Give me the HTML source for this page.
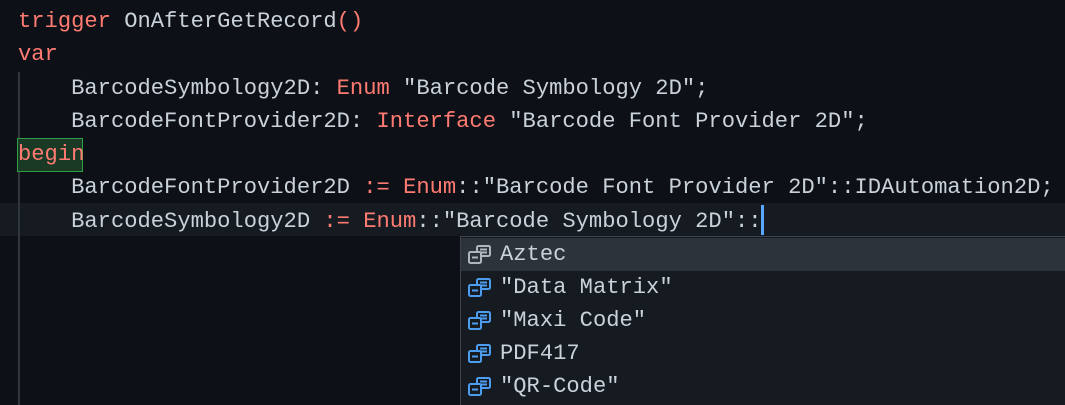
<!DOCTYPE html>
<html><head><style>
html,body{margin:0;padding:0;background:#0d1117;width:1065px;height:405px;overflow:hidden;position:relative}
.code{position:absolute;left:18px;top:5px;font-family:"Liberation Mono",monospace;font-size:22.13px;line-height:33.3px;color:#c9d1d9;white-space:pre}
.k{color:#ff7b72}
.cur{position:absolute;left:0;top:203px;width:1065px;height:33px;background:#161b22}
.guide{position:absolute;left:18px;top:72px;width:2px;height:333px;background:#30363d}
.beg{position:absolute;left:17px;top:138px;width:64px;height:32px;background:#1a3a26;border:1px solid #2ea043}
.caret{position:absolute;left:761px;top:205px;width:3px;height:30px;background:#58a6ff}
.dd{position:absolute;left:460px;top:236px;width:620px;height:180px;background:#161b22;border:1px solid #3d444d}
.it{position:absolute;left:0;width:620px;height:33px;font-family:"Liberation Mono",monospace;font-size:22.13px;line-height:33px;color:#c9d1d9;white-space:pre}
.it span{position:absolute;left:39px;top:0}
.it svg{position:absolute;left:6px;top:7px}
.sel{background:#2d333b}
</style></head><body>
<div class="cur"></div>
<div class="guide"></div>
<div class="beg"></div>
<div class="code"><span class="k">trigger</span> OnAfterGetRecord<span class="k">()</span>
<span class="k">var</span>
    BarcodeSymbology2D: <span class="k">Enum</span> "Barcode Symbology 2D";
    BarcodeFontProvider2D: <span class="k">Interface</span> "Barcode Font Provider 2D";
<span class="k">begin</span>
    BarcodeFontProvider2D <span class="k">:=</span> <span class="k">Enum</span>::"Barcode Font Provider 2D"::IDAutomation2D;
    BarcodeSymbology2D <span class="k">:=</span> <span class="k">Enum</span>::"Barcode Symbology 2D"::</div>
<div class="caret"></div>
<div class="dd">
<div class="it sel" style="top:1px"><svg width="26" height="20" viewBox="0 0 26 20" fill="none" stroke="#b0b6bd" stroke-width="2"><rect x="10" y="1" width="13" height="10" rx="1.5"/><path d="M13 4.5h7M13 7.5h7"/><rect x="2" y="7" width="12" height="11" rx="1.5" fill="#2d333b"/><path d="M5 12.5h6"/></svg><span>Aztec</span></div>
<div class="it" style="top:34px"><svg width="26" height="20" viewBox="0 0 26 20" fill="none" stroke="#4c9df0" stroke-width="2"><rect x="10" y="1" width="13" height="10" rx="1.5"/><path d="M13 4.5h7M13 7.5h7"/><rect x="2" y="7" width="12" height="11" rx="1.5" fill="#161b22"/><path d="M5 12.5h6"/></svg><span>"Data Matrix"</span></div>
<div class="it" style="top:67px"><svg width="26" height="20" viewBox="0 0 26 20" fill="none" stroke="#4c9df0" stroke-width="2"><rect x="10" y="1" width="13" height="10" rx="1.5"/><path d="M13 4.5h7M13 7.5h7"/><rect x="2" y="7" width="12" height="11" rx="1.5" fill="#161b22"/><path d="M5 12.5h6"/></svg><span>"Maxi Code"</span></div>
<div class="it" style="top:100px"><svg width="26" height="20" viewBox="0 0 26 20" fill="none" stroke="#4c9df0" stroke-width="2"><rect x="10" y="1" width="13" height="10" rx="1.5"/><path d="M13 4.5h7M13 7.5h7"/><rect x="2" y="7" width="12" height="11" rx="1.5" fill="#161b22"/><path d="M5 12.5h6"/></svg><span>PDF417</span></div>
<div class="it" style="top:133px"><svg width="26" height="20" viewBox="0 0 26 20" fill="none" stroke="#4c9df0" stroke-width="2"><rect x="10" y="1" width="13" height="10" rx="1.5"/><path d="M13 4.5h7M13 7.5h7"/><rect x="2" y="7" width="12" height="11" rx="1.5" fill="#161b22"/><path d="M5 12.5h6"/></svg><span>"QR-Code"</span></div>
</div>
</body></html>
